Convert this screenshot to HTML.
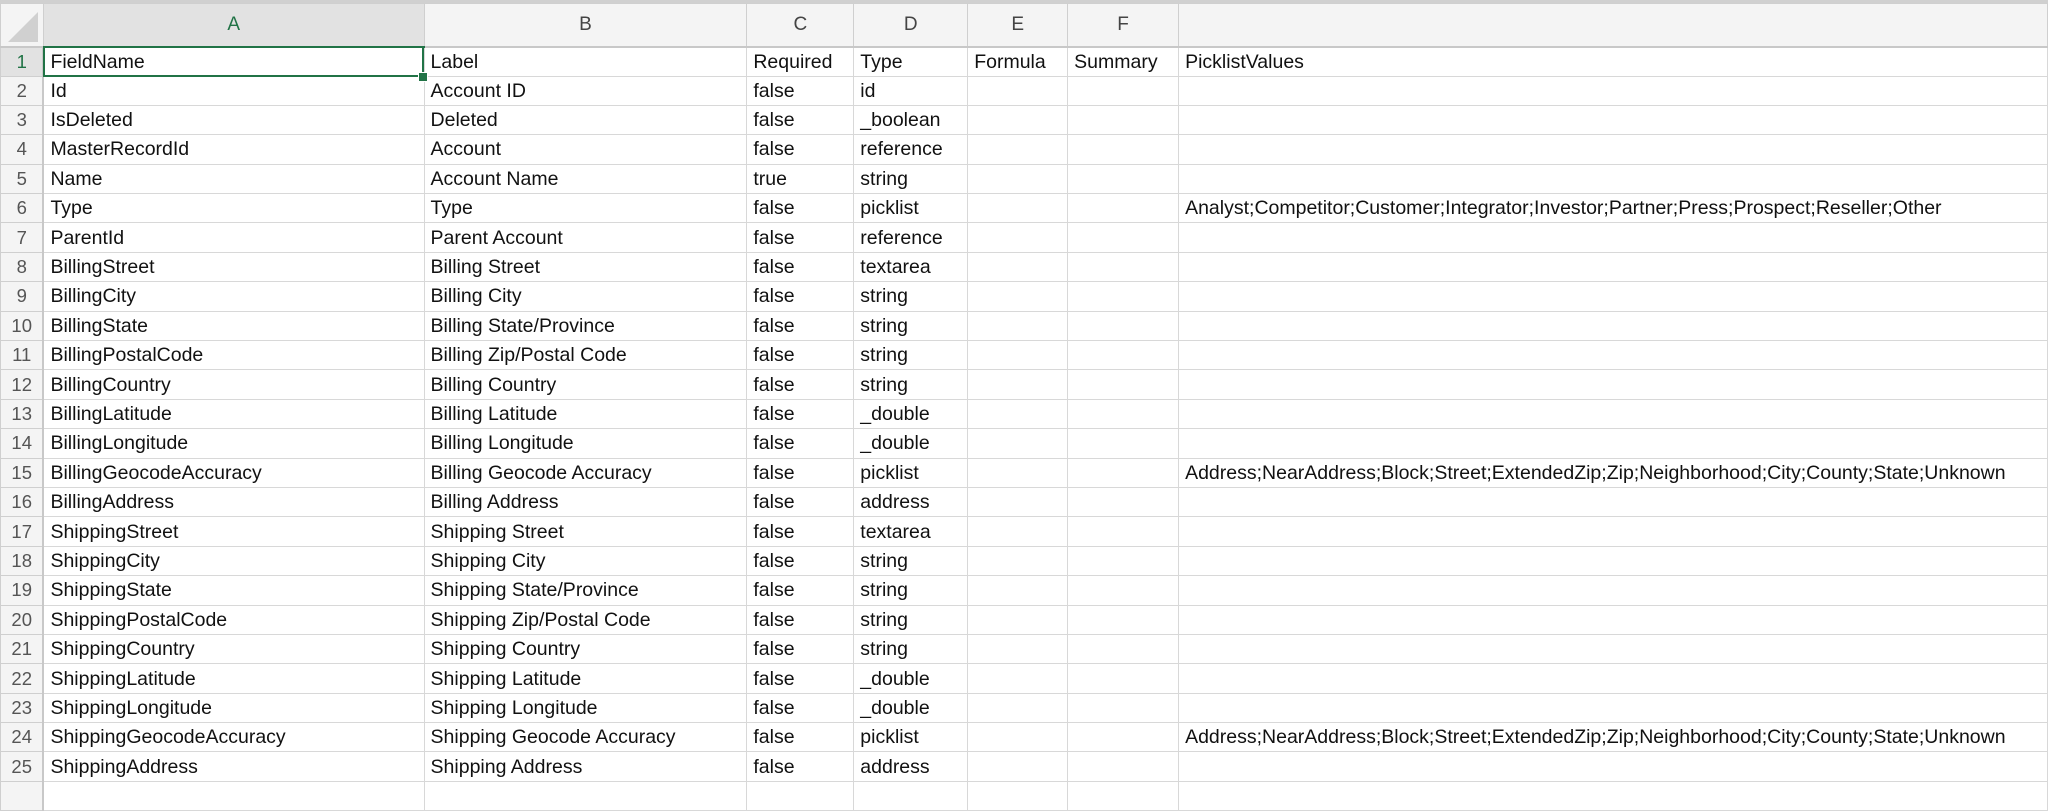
<!DOCTYPE html>
<html><head><meta charset="utf-8"><style>
html,body{margin:0;padding:0;background:#fff;width:2048px;height:784px;overflow:hidden}
body{font-family:"Liberation Sans",sans-serif;font-size:19.5px;color:#111}
table{border-collapse:collapse;table-layout:fixed;position:absolute;left:0;top:3px}
td{border:1px solid #d8d8d8;height:29.4px;padding:0 0 0 6px;white-space:nowrap;overflow:visible;line-height:28px;box-sizing:border-box}
tr.h td{height:43px;background:#f4f4f4;text-align:center;color:#444;font-size:19px;border-color:#cfcfcf;border-bottom:2px solid #c8c8c8;padding:0}
tr.h td.sel{background:#e2e2e2;color:#217346;border-bottom:2px solid #217346}
td.rn{background:#f4f4f4;color:#555;text-align:center;padding:0;border-color:#cfcfcf;border-right:2px solid #c8c8c8;font-size:18.5px}
td.rn.sel{color:#217346;background:#e2e2e2}
.top{position:absolute;left:0;top:0;width:2048px;height:3px;background:#d0d0d0}
.cur{position:absolute;left:43px;top:46px;width:381px;height:31px;border:2px solid #217346;box-sizing:border-box}
.hd{position:absolute;left:418px;top:72px;width:8px;height:8px;background:#217346;border:1px solid #fff}
.tri{position:absolute;left:8px;top:12px;width:0;height:0;border-left:30px solid transparent;border-bottom:30px solid #d0d0d0}
</style></head><body>
<div class="top"></div>
<table>
<colgroup><col style="width:43px"><col style="width:381px"><col style="width:323px"><col style="width:107px"><col style="width:114px"><col style="width:100px"><col style="width:111px"><col style="width:869px"></colgroup>
<tr class="h"><td></td><td class="sel">A</td><td>B</td><td>C</td><td>D</td><td>E</td><td>F</td><td></td></tr>
<tr><td class="rn sel">1</td><td>FieldName</td><td>Label</td><td>Required</td><td>Type</td><td>Formula</td><td>Summary</td><td>PicklistValues</td></tr>
<tr><td class="rn">2</td><td>Id</td><td>Account ID</td><td>false</td><td>id</td><td></td><td></td><td></td></tr>
<tr><td class="rn">3</td><td>IsDeleted</td><td>Deleted</td><td>false</td><td>_boolean</td><td></td><td></td><td></td></tr>
<tr><td class="rn">4</td><td>MasterRecordId</td><td>Account</td><td>false</td><td>reference</td><td></td><td></td><td></td></tr>
<tr><td class="rn">5</td><td>Name</td><td>Account Name</td><td>true</td><td>string</td><td></td><td></td><td></td></tr>
<tr><td class="rn">6</td><td>Type</td><td>Type</td><td>false</td><td>picklist</td><td></td><td></td><td>Analyst;Competitor;Customer;Integrator;Investor;Partner;Press;Prospect;Reseller;Other</td></tr>
<tr><td class="rn">7</td><td>ParentId</td><td>Parent Account</td><td>false</td><td>reference</td><td></td><td></td><td></td></tr>
<tr><td class="rn">8</td><td>BillingStreet</td><td>Billing Street</td><td>false</td><td>textarea</td><td></td><td></td><td></td></tr>
<tr><td class="rn">9</td><td>BillingCity</td><td>Billing City</td><td>false</td><td>string</td><td></td><td></td><td></td></tr>
<tr><td class="rn">10</td><td>BillingState</td><td>Billing State/Province</td><td>false</td><td>string</td><td></td><td></td><td></td></tr>
<tr><td class="rn">11</td><td>BillingPostalCode</td><td>Billing Zip/Postal Code</td><td>false</td><td>string</td><td></td><td></td><td></td></tr>
<tr><td class="rn">12</td><td>BillingCountry</td><td>Billing Country</td><td>false</td><td>string</td><td></td><td></td><td></td></tr>
<tr><td class="rn">13</td><td>BillingLatitude</td><td>Billing Latitude</td><td>false</td><td>_double</td><td></td><td></td><td></td></tr>
<tr><td class="rn">14</td><td>BillingLongitude</td><td>Billing Longitude</td><td>false</td><td>_double</td><td></td><td></td><td></td></tr>
<tr><td class="rn">15</td><td>BillingGeocodeAccuracy</td><td>Billing Geocode Accuracy</td><td>false</td><td>picklist</td><td></td><td></td><td>Address;NearAddress;Block;Street;ExtendedZip;Zip;Neighborhood;City;County;State;Unknown</td></tr>
<tr><td class="rn">16</td><td>BillingAddress</td><td>Billing Address</td><td>false</td><td>address</td><td></td><td></td><td></td></tr>
<tr><td class="rn">17</td><td>ShippingStreet</td><td>Shipping Street</td><td>false</td><td>textarea</td><td></td><td></td><td></td></tr>
<tr><td class="rn">18</td><td>ShippingCity</td><td>Shipping City</td><td>false</td><td>string</td><td></td><td></td><td></td></tr>
<tr><td class="rn">19</td><td>ShippingState</td><td>Shipping State/Province</td><td>false</td><td>string</td><td></td><td></td><td></td></tr>
<tr><td class="rn">20</td><td>ShippingPostalCode</td><td>Shipping Zip/Postal Code</td><td>false</td><td>string</td><td></td><td></td><td></td></tr>
<tr><td class="rn">21</td><td>ShippingCountry</td><td>Shipping Country</td><td>false</td><td>string</td><td></td><td></td><td></td></tr>
<tr><td class="rn">22</td><td>ShippingLatitude</td><td>Shipping Latitude</td><td>false</td><td>_double</td><td></td><td></td><td></td></tr>
<tr><td class="rn">23</td><td>ShippingLongitude</td><td>Shipping Longitude</td><td>false</td><td>_double</td><td></td><td></td><td></td></tr>
<tr><td class="rn">24</td><td>ShippingGeocodeAccuracy</td><td>Shipping Geocode Accuracy</td><td>false</td><td>picklist</td><td></td><td></td><td>Address;NearAddress;Block;Street;ExtendedZip;Zip;Neighborhood;City;County;State;Unknown</td></tr>
<tr><td class="rn">25</td><td>ShippingAddress</td><td>Shipping Address</td><td>false</td><td>address</td><td></td><td></td><td></td></tr>
<tr><td class="rn"></td><td></td><td></td><td></td><td></td><td></td><td></td><td></td></tr>
</table>
<div class="tri"></div>
<div class="cur"></div>
<div class="hd"></div>
</body></html>
